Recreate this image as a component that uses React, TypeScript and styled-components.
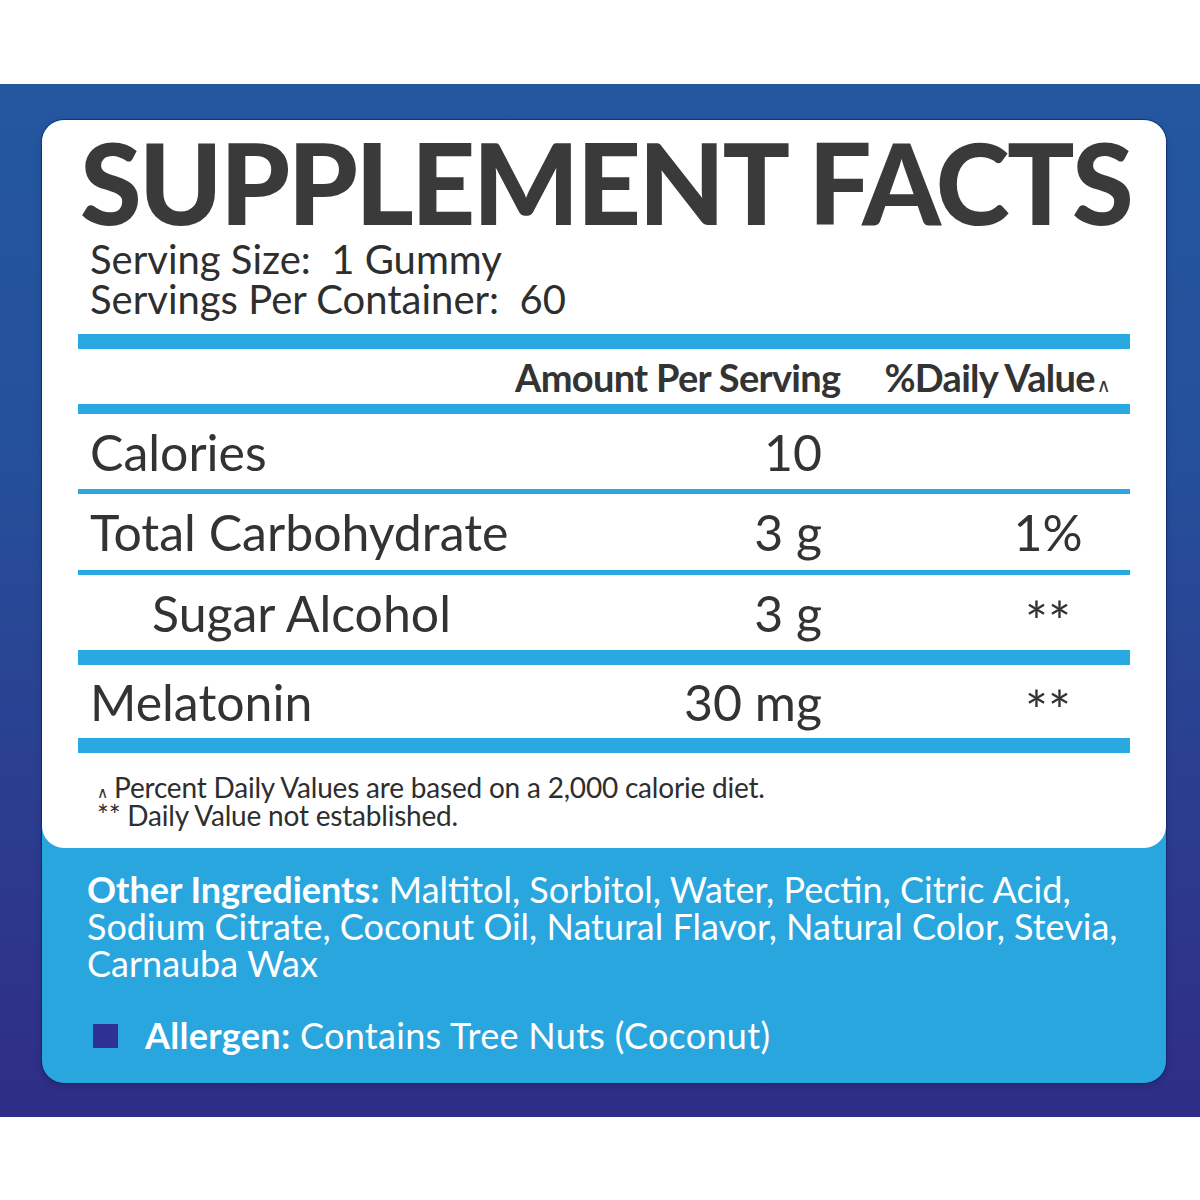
import styled, { createGlobalStyle } from "styled-components";

const GlobalStyle = createGlobalStyle`
  html, body {
    margin: 0;
    padding: 0;
    background: #ffffff;
  }
  body {
    font-family: Lato, "Liberation Sans", sans-serif;
    color: #333333;
  }
`;

const Page = styled.div`
  width: 1200px;
  height: 1200px;
  padding-top: 84px;
  box-sizing: border-box;
  background: #ffffff;
`;

const Band = styled.section`
  height: 1033px;
  box-sizing: border-box;
  padding: 36px 34px 0 42px;
  background: linear-gradient(180deg, #23579f 0%, #25509b 35%, #2b3d8f 70%, #2f2d85 100%);
`;

const Label = styled.div`
  width: 1124px;
  height: 963px;
  border-radius: 22px;
  background: #2aa6df;
  display: flex;
  flex-direction: column;
  box-shadow: 0 0 0 1px rgba(12, 32, 90, 0.55), 0 3px 6px rgba(10, 20, 70, 0.25);
`;

const FactsPanel = styled.div`
  height: 728px;
  box-sizing: border-box;
  padding: 12px 36px 0;
  background: #ffffff;
  border-radius: 22px;
`;

const Title = styled.h1`
  margin: 0;
  padding-left: 2px;
  font-size: 112px;
  line-height: 100px;
  font-weight: 900;
  letter-spacing: -2.6px;
  color: #3a3a3a;
  white-space: nowrap;
`;

const Serving = styled.div`
  margin-top: 7px;
  padding-left: 12px;
  font-size: 40px;
  line-height: 40px;
  color: #2e2e2e;
  white-space: pre;
`;

const Rule = styled.div<{ $weight: number }>`
  height: ${(p) => p.$weight}px;
  background: #29a8e1;
`;

const HeaderRow = styled.div`
  height: 55px;
  display: flex;
  align-items: center;
  justify-content: flex-end;
  gap: 44px;
  padding-right: 20px;
  font-size: 38px;
  font-weight: 700;
  letter-spacing: -0.7px;
  color: #333333;
`;

const Caret = styled.span`
  font-family: "DejaVu Sans", sans-serif;
  font-size: 0.5em;
  font-weight: 400;
  margin-left: 2px;
`;

const FactRow = styled.div<{ $height: number }>`
  height: ${(p) => p.$height}px;
  display: grid;
  grid-template-columns: 1fr 200px 308px;
  align-items: center;
  padding-left: 12px;
  font-size: 50px;
  line-height: 1;
  color: #333333;
`;

const Nutrient = styled.span<{ $indent?: boolean }>`
  padding-left: ${(p) => (p.$indent ? "62px" : "0")};
  white-space: nowrap;
`;

const Amount = styled.span`
  text-align: right;
  white-space: nowrap;
`;

const DailyValue = styled.span<{ $mark?: boolean }>`
  padding-left: 144px;
  padding-top: ${(p) => (p.$mark ? "16px" : "0")};
  text-align: center;
  font-size: ${(p) => (p.$mark ? "54px" : "inherit")};
`;

const Notes = styled.div`
  margin-top: 20px;
  padding-left: 19px;
  font-size: 28px;
  line-height: 28px;
  letter-spacing: -0.2px;
  color: #2e2e2e;
  white-space: nowrap;
`;

const NoteMark = styled.span`
  font-family: "DejaVu Sans", sans-serif;
  font-size: 0.55em;
  line-height: 1;
  margin-right: 6px;
`;

const Ingredients = styled.div`
  padding: 23px 0 0 45px;
  color: #ffffff;
  font-size: 36px;
  line-height: 37px;
  letter-spacing: 0;
`;

const Line = styled.div`
  white-space: nowrap;
`;

const Strong = styled.strong`
  font-weight: 700;
`;

const Allergen = styled.div`
  margin-top: 35px;
  display: flex;
  align-items: center;
  gap: 27px;
  padding-left: 6px;
  letter-spacing: 0.3px;
  white-space: nowrap;
`;

const Bullet = styled.span`
  width: 25px;
  height: 24px;
  background: #2e3192;
`;

const rows = [
  { name: "Calories", amount: "10", dv: "", height: 75, rule: 5 },
  { name: "Total Carbohydrate", amount: "3 g", dv: "1%", height: 76, rule: 5 },
  { name: "Sugar Alcohol", amount: "3 g", dv: "**", height: 75, rule: 15, indent: true },
  { name: "Melatonin", amount: "30 mg", dv: "**", height: 73, rule: 15 },
];

export default function App() {
  return (
    <Page>
      <GlobalStyle />
      <Band>
        <Label>
          <FactsPanel>
            <Title>SUPPLEMENT FACTS</Title>
            <Serving>
              <div>{"Serving Size:  1 Gummy"}</div>
              <div>{"Servings Per Container:  60"}</div>
            </Serving>
            <Rule $weight={15} style={{ marginTop: 15 }} />
            <HeaderRow>
              <span>Amount Per Serving</span>
              <span>
                %Daily Value<Caret>∧</Caret>
              </span>
            </HeaderRow>
            <Rule $weight={10} />
            {rows.map((row) => (
              <div key={row.name}>
                <FactRow $height={row.height}>
                  <Nutrient $indent={row.indent}>{row.name}</Nutrient>
                  <Amount>{row.amount}</Amount>
                  <DailyValue $mark={row.dv === "**"}>{row.dv}</DailyValue>
                </FactRow>
                <Rule $weight={row.rule} />
              </div>
            ))}
            <Notes>
              <div>
                <NoteMark>∧</NoteMark>Percent Daily Values are based on a 2,000 calorie diet.
              </div>
              <div>** Daily Value not established.</div>
            </Notes>
          </FactsPanel>
          <Ingredients>
            <Line>
              <Strong>Other Ingredients:</Strong> Maltitol, Sorbitol, Water, Pectin, Citric Acid,
            </Line>
            <Line>Sodium Citrate, Coconut Oil, Natural Flavor, Natural Color, Stevia,</Line>
            <Line>Carnauba Wax</Line>
            <Allergen>
              <Bullet />
              <span>
                <Strong>Allergen:</Strong> Contains Tree Nuts (Coconut)
              </span>
            </Allergen>
          </Ingredients>
        </Label>
      </Band>
    </Page>
  );
}
